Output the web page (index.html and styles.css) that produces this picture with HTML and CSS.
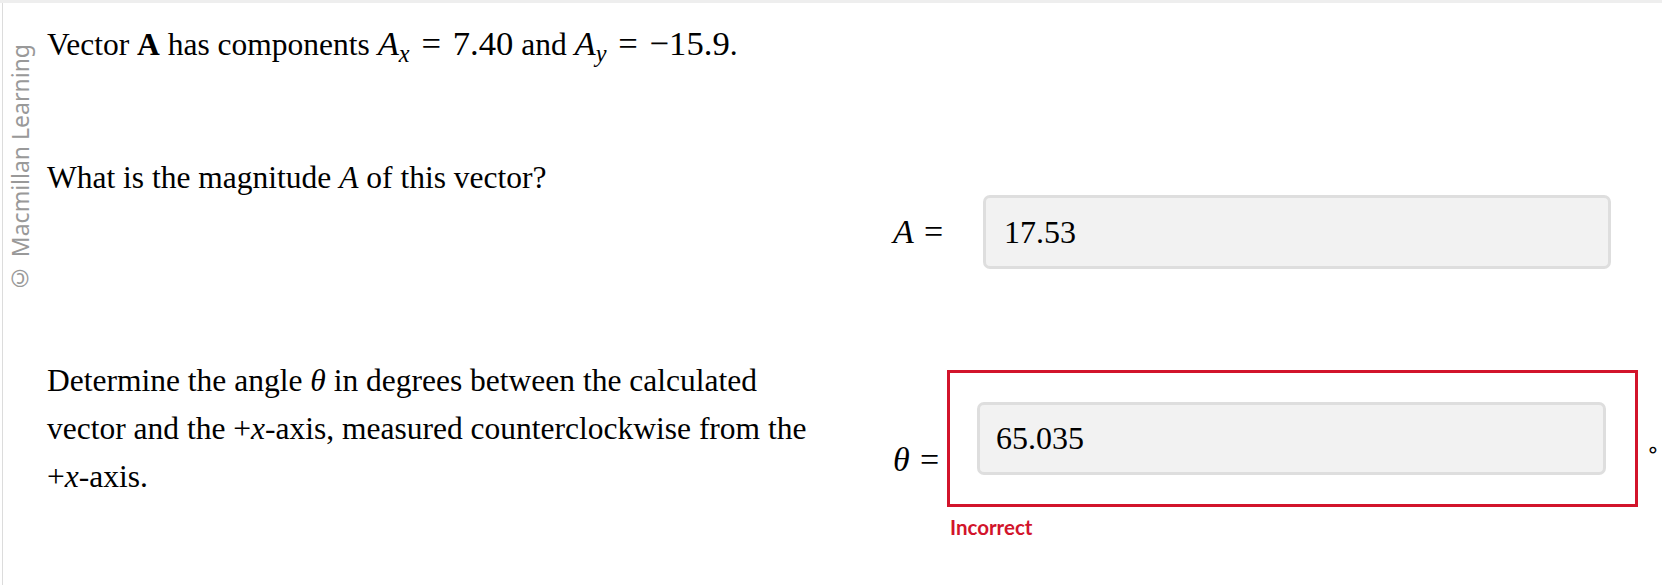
FILE: index.html
```html
<!DOCTYPE html>
<html lang="en">
<head>
<meta charset="utf-8">
<title>Vector components</title>
<link rel="stylesheet" href="styles.css">
</head>
<body>
<div class="page">
  <div class="frame">
    <aside class="brand"><span class="brand-text">© Macmillan Learning</span></aside>
    <main class="content">
      <p class="intro">Vector <b>A</b> has components <span class="math"><i>A</i><sub>x</sub><span class="rel">=</span>7.40</span> and <span class="math"><i>A</i><sub>y</sub><span class="rel">=</span>−15.9</span>.</p>
      <section class="part part-a">
        <p class="prompt">What is the magnitude <i>A</i> of this vector?</p>
        <div class="answer answer-a">
          <span class="label"><i>A</i><span class="rel">=</span></span>
          <div class="field">17.53</div>
        </div>
      </section>
      <section class="part part-theta">
        <p class="prompt">Determine the angle <i>θ</i> in degrees between the calculated vector and the +<i>x</i>-axis, measured counterclockwise from the +<i>x</i>-axis.</p>
        <div class="answer answer-theta">
          <span class="label"><i>θ</i><span class="rel">=</span></span>
          <div class="feedback">
            <div class="incorrect-box"><div class="field">65.035</div></div>
            <div class="msg">Incorrect</div>
          </div>
          <span class="unit">∘</span>
        </div>
      </section>
    </main>
  </div>
</div>
</body>
</html>
```
FILE: styles.css
```css
html, body {
  margin: 0;
  background: #ffffff;
}
body {
  font-family: "Liberation Serif", "Times New Roman", serif;
  color: #000;
}
.page {
  border-top: 3px solid #eeeeee;
  padding-left: 2px;
  height: 585px;
  box-sizing: border-box;
}
.frame {
  display: flex;
  border-left: 1px solid #dcdcdc;
  height: 100%;
}
.brand {
  flex: none;
  width: 44px;
  padding-top: 41px;
}
.brand-text {
  display: block;
  writing-mode: vertical-rl;
  transform: rotate(180deg);
  font-family: "Noto Sans", "Open Sans", sans-serif;
  font-size: 23px;
  line-height: 24px;
  color: #999999;
  margin-left: 5px;
  white-space: nowrap;
}
.content {
  flex: 1;
  padding-top: 18px;
  font-size: 31.5px;
}
p {
  margin: 0;
  line-height: 48px;
}
.math {
  font-size: 110%;
  line-height: 1;
}
sub {
  font-size: 70%;
  font-style: italic;
  vertical-align: -0.28em;
  line-height: 0;
}
.rel {
  margin: 0 0.34em;
}
.part {
  display: grid;
  grid-template-columns: 846px auto;
  align-items: start;
}
.part-a {
  margin-top: 85px;
}
.part-theta {
  margin-top: 88px;
}
.prompt {
  max-width: 780px;
}
.answer {
  display: flex;
  align-items: center;
}
.label {
  flex: none;
  white-space: nowrap;
  line-height: 1;
  font-size: 34px;
}
.label .rel {
  margin: 0 0 0 0.3em;
}
.answer-a {
  margin-top: 41px;
}
.answer-a .label {
  width: 90px;
}
.answer-theta {
  margin-top: 13px;
}
.answer-theta .label {
  width: 54px;
  margin-top: 10px;
}
.field {
  box-sizing: border-box;
  width: 628px;
  height: 74px;
  border: 3px solid #dedede;
  border-radius: 7px;
  background: #f2f2f2;
  display: flex;
  align-items: center;
  padding-left: 18px;
  font-size: 32px;
}
.incorrect-box {
  border: 3px solid #d2142b;
  padding: 29px 29px 29px 27px;
}
.incorrect-box .field {
  width: 629px;
  height: 73px;
  padding-left: 16px;
}
.msg {
  margin-top: 7px;
  padding-left: 3px;
  font-family: "Lato", sans-serif;
  font-weight: 700;
  font-size: 20.5px;
  line-height: 26px;
  color: #d2142b;
}
.unit {
  margin-left: 8px;
  margin-top: -10px;
  font-family: "DejaVu Sans", sans-serif;
  font-size: 22px;
  line-height: 1;
}
```
